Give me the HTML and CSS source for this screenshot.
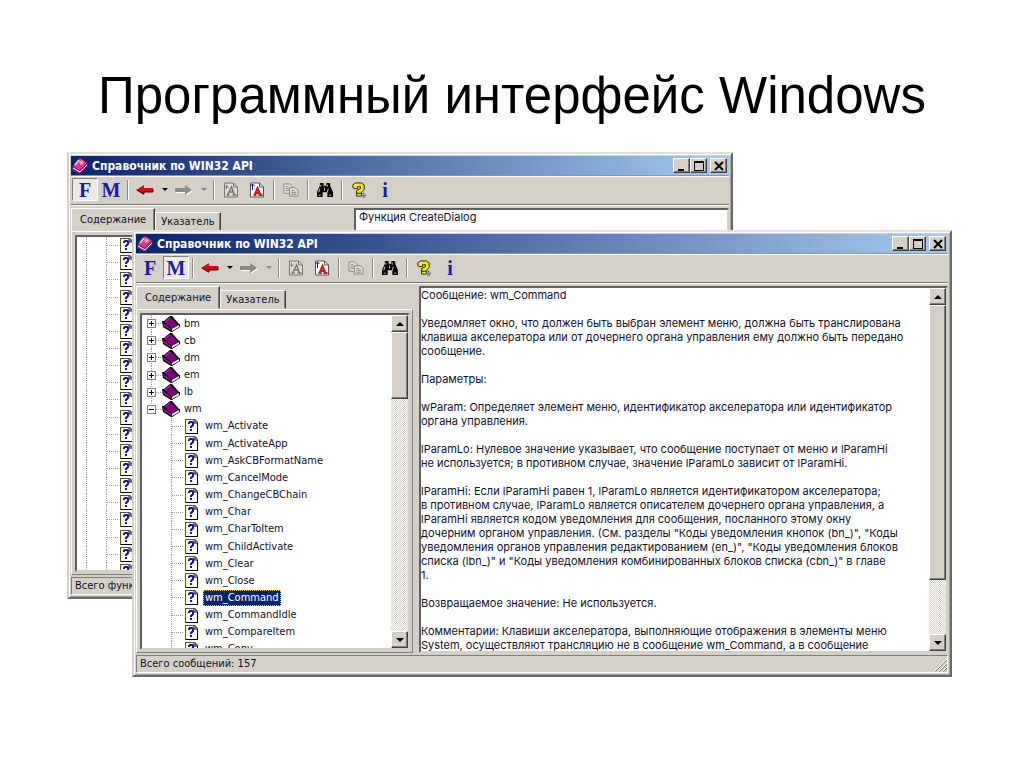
FILE: index.html
```html
<!DOCTYPE html>
<html lang="ru">
<head>
  <meta charset="UTF-8">
  <meta name="viewport" content="width=device-width, initial-scale=1.0">
  <title>Программный интерфейс Windows</title>
  <link rel="stylesheet" href="styles.css">
</head>
<body>
  <!-- Иконки -->
  <svg class="sprite" aria-hidden="true">
    <symbol id="app" viewBox="0 0 16 16">
      <path d="M1 8 8 0l8 5v3l-8 8-8-4z" fill="#7a0f6e"/>
      <path d="M1 8 8 0l7 5-7 7z" fill="#d2389a"/>
      <path d="m1 9 7 4 7-7v2l-7 7-7-4z" fill="#fff"/>
      <path d="M1 9l7 4 7-7M1 11l7 4 7-7" fill="none" stroke="#a0207e"/>
      <path d="m7 4 3-2 2 3-3 2z" fill="#f8b070"/>
      <path d="m3 7 4-5" stroke="#ffb4e0" stroke-width="2"/>
    </symbol>
    <symbol id="book" viewBox="0 0 18 16">
      <path d="M0 5h2l6-5h2l7 8h1v3l-8 5H9L1 11z" fill="#000"/>
      <path d="m2 6 6-5 8 8-6 4z" fill="#800080"/>
      <path d="m1 7 9 7v1l-8-5z" fill="#a020a0"/>
      <path d="m10 13 7-4v2l-7 4z" fill="#fff"/>
      <path d="m3 6 5-4" stroke="#b040b0"/>
    </symbol>
    <symbol id="topic" viewBox="0 0 13 15">
      <path d="M0 0h10l3 3v12H0z" fill="#55534c"/>
      <path d="M11 4h2v11H1v-1h10z" fill="#000"/>
      <path d="M1 1h9v2h2v11H1z" fill="#fff"/>
      <path d="M1 1h2v13H1z" fill="#ffffb0"/>
      <path d="M9 1v3h3" fill="none" stroke="#000"/>
      <path d="M4 5V4l1-1h2l1 1v2L6 8v1M6 10v2" fill="none" stroke="#1a1496" stroke-width="2"/>
    </symbol>
    <symbol id="back" viewBox="0 0 18 10">
      <path d="M0 5 8 0v3h9v4H8v3z" fill="#d01010"/>
      <path d="m1 5 7 4V7h9V4" fill="none" stroke="#500"/>
    </symbol>
    <symbol id="forward" viewBox="0 0 18 10">
      <path d="M18 6 11 11V8H1V5h10V1z" fill="#fff"/>
      <path d="M17 5 10 0v3H0v4h10v3z" fill="#8a8a86"/>
    </symbol>
    <symbol id="page-gray" viewBox="0 0 15 16">
      <path d="M1 1h9l4 4v10H1z" fill="#dedbd4" stroke="#77756f"/>
      <path d="M10 1v4h4M3 3v4M2 5h3" fill="none" stroke="#77756f"/>
      <path d="m4 13 4-8 3 8M5 10h5M3 13h3M9 13h4" fill="none" stroke="#77756f" stroke-width="1.5"/>
    </symbol>
    <symbol id="page-red" viewBox="0 0 15 16">
      <path d="M1 1h9l4 4v10H1z" fill="#fff" stroke="#55535a"/>
      <path d="M10 1v4h4" fill="none" stroke="#55535a"/>
      <path d="M3 8V2M1 4l2-2 2 2" fill="none" stroke="#1919a8"/>
      <path d="m5 13 3-7 3 7M6 11h4M4 13h3M9 13h4" fill="none" stroke="#d5131d" stroke-width="2"/>
    </symbol>
    <symbol id="copy" viewBox="0 0 17 15">
      <path d="M1 1h6l3 3v7H1z" fill="#e0ddd6" stroke="#8a8882"/>
      <path d="M3 4h3M3 6h4M3 8h4" stroke="#8a8882"/>
      <path d="M7 5h6l3 3v6H7z" fill="#e0ddd6" stroke="#8a8882"/>
      <path d="M9 8h3M9 10h5M9 12h5" stroke="#8a8882"/>
    </symbol>
    <symbol id="find" viewBox="0 0 17 15">
      <path d="M3 0h4v3h3V0h4v3l3 7v5h-6v-5H6v5H0v-5l3-7z" fill="#050505"/>
      <path d="M4 2v2M11 2v2M3 6l-1 4M8 5v3M12 6l-1 4M2 13h2M13 13h2" stroke="#d4d0c8"/>
    </symbol>
    <symbol id="help" viewBox="0 0 15 17">
      <path d="M1 6V3l3-2h6l3 2v5l-3 3v4H5V9l4-2V5H6v2H3z" fill="#f4e800" stroke="#222"/>
      <path d="M5 12h5" stroke="#222"/>
      <path d="M11 12h2M10 14h5M11 16h3" stroke="#444"/>
      <path d="M3 3h2M3 4h1" stroke="#fff"/>
    </symbol>
    <symbol id="up" viewBox="0 0 8 4"><path d="M4 0 8 4H0z"/></symbol>
    <symbol id="down" viewBox="0 0 8 4"><path d="M0 0h8L4 4z"/></symbol>
    <symbol id="min" viewBox="0 0 10 10"><path d="M1 8h6v2H1z"/></symbol>
    <symbol id="max" viewBox="0 0 10 10"><path d="M0 0h10v10H0zM1 2v7h8V2z" fill-rule="evenodd"/></symbol>
    <symbol id="close" viewBox="0 0 10 10"><path d="m1 1 8 8M9 1 1 9" stroke="#000" stroke-width="2"/></symbol>
    <symbol id="grip" viewBox="0 0 13 13">
      <path d="M1 13 13 1M5 13l8-8M9 13l4-4" stroke="#808080"/>
      <path d="M0 13 13 0M4 13l9-9M8 13l5-5" stroke="#fff"/>
    </symbol>
  </svg>

  <h1 class="slide-title">Программный интерфейс Windows</h1>

  <main class="desktop">
    <!-- Заднее окно: функции -->
    <section class="window window-back">
      <header class="titlebar">
        <svg class="app-icon"><use href="#app"/></svg>
        <h2>Справочник по WIN32 API</h2>
        <button class="win-btn" aria-label="Свернуть"><svg><use href="#min"/></svg></button>
        <button class="win-btn" aria-label="Развернуть"><svg><use href="#max"/></svg></button>
        <button class="win-btn win-close" aria-label="Закрыть"><svg><use href="#close"/></svg></button>
      </header>
      <div class="toolbar">
        <button class="tool letter pressed">F</button>
        <button class="tool letter">M</button>
        <span class="sep"></span>
        <button class="tool arrow" aria-label="Назад"><svg><use href="#back"/></svg></button>
        <button class="tool caret" aria-label="История назад"><svg><use href="#down"/></svg></button>
        <button class="tool arrow" aria-label="Вперёд"><svg><use href="#forward"/></svg></button>
        <button class="tool caret off" aria-label="История вперёд"><svg><use href="#down"/></svg></button>
        <span class="sep"></span>
        <button class="tool" aria-label="Обычный шрифт"><svg><use href="#page-gray"/></svg></button>
        <button class="tool" aria-label="Шрифт"><svg><use href="#page-red"/></svg></button>
        <span class="sep"></span>
        <button class="tool" aria-label="Копировать"><svg><use href="#copy"/></svg></button>
        <span class="sep"></span>
        <button class="tool" aria-label="Найти"><svg><use href="#find"/></svg></button>
        <span class="sep"></span>
        <button class="tool" aria-label="Справка"><svg><use href="#help"/></svg></button>
        <button class="tool letter">i</button>
      </div>
      <div class="body">
        <div class="sidebar">
          <div class="tabs">
            <button class="tab active">Содержание</button>
            <button class="tab">Указатель</button>
          </div>
          <div class="tab-page">
            <div class="tree-box">
              <ul class="tree" id="functionTree"></ul>
            </div>
          </div>
        </div>
        <div class="article">
          <div class="article-text short"><p>Функция CreateDialog</p></div>
        </div>
      </div>
      <footer class="status"><span>Всего функций</span></footer>
    </section>

    <!-- Переднее окно: сообщения -->
    <section class="window window-front">
      <header class="titlebar">
        <svg class="app-icon"><use href="#app"/></svg>
        <h2>Справочник по WIN32 API</h2>
        <button class="win-btn" aria-label="Свернуть"><svg><use href="#min"/></svg></button>
        <button class="win-btn" aria-label="Развернуть"><svg><use href="#max"/></svg></button>
        <button class="win-btn win-close" aria-label="Закрыть"><svg><use href="#close"/></svg></button>
      </header>
      <div class="toolbar">
        <button class="tool letter">F</button>
        <button class="tool letter pressed">M</button>
        <span class="sep"></span>
        <button class="tool arrow" aria-label="Назад"><svg><use href="#back"/></svg></button>
        <button class="tool caret" aria-label="История назад"><svg><use href="#down"/></svg></button>
        <button class="tool arrow" aria-label="Вперёд"><svg><use href="#forward"/></svg></button>
        <button class="tool caret off" aria-label="История вперёд"><svg><use href="#down"/></svg></button>
        <span class="sep"></span>
        <button class="tool" aria-label="Обычный шрифт"><svg><use href="#page-gray"/></svg></button>
        <button class="tool" aria-label="Шрифт"><svg><use href="#page-red"/></svg></button>
        <span class="sep"></span>
        <button class="tool" aria-label="Копировать"><svg><use href="#copy"/></svg></button>
        <span class="sep"></span>
        <button class="tool" aria-label="Найти"><svg><use href="#find"/></svg></button>
        <span class="sep"></span>
        <button class="tool" aria-label="Справка"><svg><use href="#help"/></svg></button>
        <button class="tool letter">i</button>
      </div>
      <div class="body">
        <div class="sidebar">
          <div class="tabs">
            <button class="tab active">Содержание</button>
            <button class="tab">Указатель</button>
          </div>
          <div class="tab-page">
            <div class="tree-box">
              <ul class="tree" id="messageTree"></ul>
              <div class="scrollbar">
                <button class="scroll-btn" aria-label="Вверх"><svg><use href="#up"/></svg></button>
                <div class="thumb thumb-tree"></div>
                <button class="scroll-btn scroll-end" aria-label="Вниз"><svg><use href="#down"/></svg></button>
              </div>
            </div>
          </div>
        </div>
        <div class="article">
          <div class="article-text">
            <p>Сообщение: wm_Command</p>
            <p>Уведомляет окно, что должен быть выбран элемент меню, должна быть транслирована<br>
              клавиша акселератора или от дочернего органа управления ему должно быть передано<br>
              сообщение.</p>
            <p>Параметры:</p>
            <p>wParam: Определяет элемент меню, идентификатор акселератора или идентификатор<br>
              органа управления.</p>
            <p>lParamLo: Нулевое значение указывает, что сообщение поступает от меню и lParamHi<br>
              не используется; в противном случае, значение lParamLo зависит от lParamHi.</p>
            <p>lParamHi: Если lParamHi равен 1, lParamLo является идентификатором акселератора;<br>
              в противном случае, lParamLo является описателем дочернего органа управления, а<br>
              lParamHi является кодом уведомления для сообщения, посланного этому окну<br>
              дочерним органом управления. (См. разделы "Коды уведомления кнопок (bn_)", "Коды<br>
              уведомления органов управления редактированием (en_)", "Коды уведомления блоков<br>
              списка (lbn_)" и "Коды уведомления комбинированных блоков списка (cbn_)" в главе<br>
              1.</p>
            <p>Возвращаемое значение: Не используется.</p>
            <p>Комментарии: Клавиши акселератора, выполняющие отображения в элементы меню<br>
              System, осуществляют трансляцию не в сообщение wm_Command, а в сообщение</p>
          </div>
          <div class="scrollbar">
            <button class="scroll-btn" aria-label="Вверх"><svg><use href="#up"/></svg></button>
            <div class="thumb thumb-article"></div>
            <button class="scroll-btn scroll-end" aria-label="Вниз"><svg><use href="#down"/></svg></button>
          </div>
        </div>
      </div>
      <footer class="status">
        <span>Всего сообщений: 157</span>
        <svg class="grip"><use href="#grip"/></svg>
      </footer>
    </section>
  </main>

  <script>
    const groups = ['bm', 'cb', 'dm', 'em', 'lb', 'wm'];
    const messages = [
      'wm_Activate', 'wm_ActivateApp', 'wm_AskCBFormatName', 'wm_CancelMode',
      'wm_ChangeCBChain', 'wm_Char', 'wm_CharToItem', 'wm_ChildActivate',
      'wm_Clear', 'wm_Close', 'wm_Command', 'wm_CommandIdle', 'wm_CompareItem', 'wm_Copy'
    ];
    const selected = 'wm_Command';

    function groupRow(name) {
      const open = name === 'wm';
      return `<li class="row group${open ? ' last' : ''}">
        <button class="expander${open ? '' : ' plus'}" aria-label="${name}"></button>
        <svg class="book"><use href="#book"/></svg><span class="label">${name}</span></li>`;
    }

    function topicRow(name, extra) {
      return `<li class="row topic ${extra}"><svg class="page"><use href="#topic"/></svg>
        <span class="label${name === selected ? ' selected' : ''}">${name}</span></li>`;
    }

    document.getElementById('messageTree').innerHTML =
      groups.map(groupRow).join('') + messages.map(m => topicRow(m, '')).join('');

    // список функций закрыт передним окном, видны только значки
    document.getElementById('functionTree').innerHTML =
      Array.from({ length: 20 }, () => topicRow('', 'nested')).join('');
  </script>
</body>
</html>
```
FILE: styles.css
```css
* {
  box-sizing: border-box;
}
body {
  margin: 0;
  background: #fff;
  color: #101028;
  font-family: "DejaVu Sans Condensed", "DejaVu Sans", sans-serif;
  font-size: 11px;
  line-height: 14px;
}
h1, h2, p, ul {
  margin: 0;
  padding: 0;
}
button {
  font: inherit;
  color: inherit;
  padding: 0;
  border: 0;
  background: none;
}
svg {
  display: block;
}
.sprite {
  display: none;
}
.slide-title {
  padding-top: 67px;
  height: 152px;
  color: #000;
  font-family: "Liberation Sans", Arial, sans-serif;
  font-size: 51px;
  font-weight: normal;
  line-height: 58px;
  text-align: center;
}

/* Окна */
.desktop {
  display: grid;
  padding: 0 72px 0 67px;
}
.window {
  grid-area: 1 / 1;
  align-self: start;
  min-width: 0;
  padding: 2px;
  background: #d4d0c8;
  border: 2px solid;
  border-color: #e4e1da #6a6a6a #6a6a6a #d4d0c8;
  box-shadow: inset 1px 1px #fff, inset -1px -1px #a8a59e;
}
.window-back {
  margin-right: 219px;
}
.window-front {
  margin: 78px 0 0 65px;
}
.titlebar {
  display: flex;
  align-items: center;
  height: 19px;
  padding: 0 2px 0 1px;
  background: linear-gradient(to right, #0a246a, #a6caf0);
}
.titlebar h2 {
  flex: 1;
  margin-left: 4px;
  color: #fff;
  font-size: 12px;
  font-weight: bold;
}
.app-icon {
  width: 16px;
  height: 16px;
}
.win-btn, .scroll-btn, .thumb {
  background: #d4d0c8;
  border: 1px solid;
  border-color: #fff #404040 #404040 #fff;
  box-shadow: inset -1px -1px #808080;
}
.win-btn {
  display: grid;
  place-items: center;
  width: 17px;
  height: 15px;
}
.win-btn svg {
  width: 10px;
  height: 10px;
}
.win-close {
  margin-left: 3px;
}

/* Панель инструментов */
.toolbar {
  display: flex;
  align-items: center;
  height: 30px;
  padding: 0 0 1px 1px;
  border-top: 1px solid #8a96a8;
  border-bottom: 1px solid #77756f;
  box-shadow: inset 0 1px #fff;
}
.tool {
  display: grid;
  place-items: center;
  width: 26px;
  height: 23px;
}
.tool svg {
  width: 16px;
  height: 16px;
}
.letter {
  color: #1b1ba6;
  font-family: "Liberation Serif", "Times New Roman", serif;
  font-size: 20px;
  font-weight: bold;
  line-height: 20px;
}
.pressed {
  background: #ebe9e4;
  border: 1px solid;
  border-color: #808080 #fff #fff #808080;
}
.arrow svg {
  width: 18px;
  height: 10px;
}
.caret {
  width: 13px;
}
.caret svg {
  width: 6px;
  height: 3px;
}
.off {
  fill: #8a8882;
}
.sep {
  width: 2px;
  height: 20px;
  margin: 0 3px;
  border-left: 1px solid #8a8882;
  border-right: 1px solid #fff;
}

/* Содержимое */
.body {
  display: flex;
  height: 372px;
  padding: 2px 0;
  border-top: 1px solid #fff;
}
.sidebar {
  display: flex;
  flex-direction: column;
  width: 278px;
  padding-right: 1px;
  margin-right: 5px;
}
.tabs {
  display: flex;
  align-items: flex-end;
  height: 23px;
}
.tab {
  height: 19px;
  padding: 0 5px;
  border: 1px solid;
  border-color: #fff #404040 transparent #fff;
  box-shadow: inset -1px 0 #808080;
}
.tab.active {
  height: 23px;
  padding: 0 8px;
}
.tab-page {
  flex: 1;
  min-height: 0;
  padding: 3px 2px 2px 3px;
  border: 1px solid;
  border-color: #fff #808080 #808080 #fff;
}
.tree-box {
  display: flex;
  height: 100%;
  overflow: hidden;
  background: #fff;
  border: 2px solid;
  border-color: #606060 #d4d0c8 #d4d0c8 #606060;
}
.tree {
  flex: 1;
  display: grid;
  grid-template-rows: repeat(20, 1fr);
  height: 343px;
  list-style: none;
}
.row {
  display: flex;
  align-items: center;
  min-height: 0;
}
.group {
  padding-left: 5px;
  background:
    repeating-linear-gradient(to bottom, #999 0 1px, transparent 1px 2px) no-repeat 9px 0 / 1px 100%,
    repeating-linear-gradient(to right, #999 0 1px, transparent 1px 2px) no-repeat 14px 50% / 7px 1px;
}
.group.last {
  background:
    repeating-linear-gradient(to bottom, #999 0 1px, transparent 1px 2px) no-repeat 9px 0 / 1px 50%,
    repeating-linear-gradient(to right, #999 0 1px, transparent 1px 2px) no-repeat 14px 50% / 7px 1px;
}
.expander {
  width: 9px;
  height: 9px;
  border: 1px solid #808080;
  background: linear-gradient(#000, #000) no-repeat center / 5px 1px, #fff;
}
.expander.plus {
  background:
    linear-gradient(#000, #000) no-repeat center / 5px 1px,
    linear-gradient(#000, #000) no-repeat center / 1px 5px,
    #fff;
}
.book {
  width: 18px;
  height: 16px;
  margin: 0 2px 0 6px;
}
.topic {
  padding-left: 43px;
  background:
    repeating-linear-gradient(to bottom, #999 0 1px, transparent 1px 2px) no-repeat 29px 0 / 1px 100%,
    repeating-linear-gradient(to right, #999 0 1px, transparent 1px 2px) no-repeat 30px 50% / 12px 1px;
}
.nested {
  background:
    repeating-linear-gradient(to bottom, #999 0 1px, transparent 1px 2px) no-repeat 9px 0 / 1px 100%,
    repeating-linear-gradient(to bottom, #999 0 1px, transparent 1px 2px) no-repeat 29px 0 / 1px 100%,
    repeating-linear-gradient(to right, #999 0 1px, transparent 1px 2px) no-repeat 30px 50% / 12px 1px;
}
.page {
  width: 13px;
  height: 15px;
  margin-right: 5px;
}
.label {
  padding: 1px 2px;
}
.selected {
  background: #0a246a;
  color: #fff;
  outline: 1px dotted #d8c060;
  outline-offset: -1px;
}
.article {
  flex: 1;
  display: flex;
  min-width: 0;
  overflow: hidden;
  background: #fff;
  border: 2px solid;
  border-color: #606060 #d4d0c8 #d4d0c8 #606060;
}
.article-text {
  flex: 1;
  min-width: 0;
  overflow: hidden;
  font-family: Inter, "DejaVu Sans Condensed", sans-serif;
  white-space: nowrap;
}
.article-text.short {
  padding: 0 3px;
}
.article-text p {
  margin-bottom: 14px;
}

/* Полосы прокрутки */
.scrollbar {
  display: flex;
  flex-direction: column;
  width: 17px;
  background: repeating-conic-gradient(#fff 0 25%, #d4d0c8 0 50%) 0 0 / 2px 2px;
}
.scroll-btn {
  display: grid;
  place-items: center;
  width: 17px;
  height: 17px;
}
.scroll-btn svg {
  width: 8px;
  height: 4px;
}
.scroll-end {
  margin-top: auto;
}
.thumb-tree {
  height: 67px;
}
.thumb-article {
  height: 275px;
}

/* Строка состояния */
.status {
  display: flex;
  justify-content: space-between;
  align-items: center;
  height: 18px;
  padding-left: 3px;
  border: 1px solid;
  border-color: #808080 #fff #fff #808080;
}
.grip {
  align-self: flex-end;
  width: 13px;
  height: 13px;
}
```
